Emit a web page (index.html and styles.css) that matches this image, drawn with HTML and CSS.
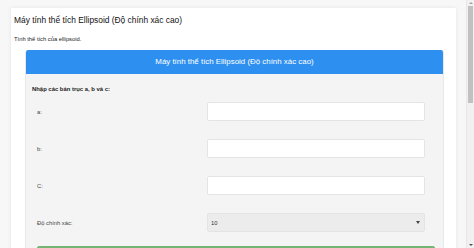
FILE: index.html
```html
<!DOCTYPE html>
<html lang="vi">
<head>
<meta charset="utf-8">
<title>Máy tính thể tích Ellipsoid</title>
<link rel="stylesheet" href="styles.css">
</head>
<body>
<div class="container">
  <h1 class="title">Máy tính thể tích Ellipsoid (Độ chính xác cao)</h1>
  <p class="desc">Tính thể tích của ellipsoid.</p>
  <div class="card">
    <div class="card-header">Máy tính thể tích Ellipsoid (Độ chính xác cao)</div>
    <div class="card-body">
      <div class="section-label">Nhập các bán trục a, b và c:</div>
      <div class="row"><label class="lbl">a:</label><input class="field" type="text"></div>
      <div class="row"><label class="lbl">b:</label><input class="field" type="text"></div>
      <div class="row"><label class="lbl">C:</label><input class="field" type="text"></div>
      <div class="row"><label class="lbl">Độ chính xác:</label>
        <div class="select-wrap">
          <select class="field select"><option>10</option></select>
        </div>
      </div>
      <button class="btn">Tính toán</button>
      <div class="result"></div>
    </div>
  </div>
</div>
<div class="scrollbar" aria-hidden="true">
  <span class="sb-up"></span>
  <span class="sb-thumb"></span>
  <span class="sb-down"></span>
</div>
</body>
</html>
```
FILE: styles.css
```css
body {
  margin: 0;
  background: #f7f7f7;
  font-family: "Liberation Sans", Arial, sans-serif;
  color: #222;
  padding: 8px 18px 300px 11px;
}
.container {
  background: #fff;
  box-shadow: 0 0 4px rgba(0,0,0,0.08);
  padding: 7px 12px 10px 14px;
}
.title {
  font-size: 8.4px;
  font-weight: normal;
  margin: 0 0 0 -11px;
  line-height: 11px;
  color: #111;
}
.desc {
  font-size: 5.8px;
  margin: 10px 0 0 -11px;
  line-height: 7px;
  color: #222;
}
.card {
  margin-top: 7px;
  border-radius: 3px;
  overflow: hidden;
  background: #f4f4f4;
  border: 1px solid #e8e8e8;
  border-top: none;
}
.card-header {
  background: #2d8ff0;
  color: #fff;
  text-align: center;
  font-size: 7.9px;
  height: 24px;
  line-height: 23px;
}
.card-body {
  padding: 11px 8px 0 6px;
}
.section-label {
  font-size: 5.9px;
  font-weight: bold;
  line-height: 8px;
  margin-bottom: 9px;
}
.row {
  display: grid;
  grid-template-columns: 1fr 218px;
  align-items: center;
  padding: 0 10px 0 5px;
  margin-bottom: 18px;
}
.lbl {
  font-size: 5.8px;
  color: #444;
}
.field {
  box-sizing: border-box;
  display: block;
  width: 100%;
  height: 19px;
  border: 1px solid #e4e4e4;
  border-radius: 2px;
  background: #fff;
  margin: 0;
  font-family: "Liberation Sans", Arial, sans-serif;
}
.select-wrap {
  position: relative;
}
.select-wrap::after {
  content: "";
  position: absolute;
  right: 5px;
  top: 8px;
  border-left: 2px solid transparent;
  border-right: 2px solid transparent;
  border-top: 3px solid #444;
}
.select {
  -webkit-appearance: none;
  appearance: none;
  background: #ececec;
  font-size: 5.8px;
  color: #333;
  padding-left: 3px;
}
.btn {
  display: block;
  box-sizing: border-box;
  width: 398px;
  margin: -4px 0 0 5px;
  height: 20px;
  border: 0;
  padding: 0;
  background-color: #74b574;
  color: #fff;
  border-radius: 2px;
  font-size: 6px;
  font-family: "Liberation Sans", Arial, sans-serif;
}
.result {
  height: 40px;
}
.scrollbar {
  position: fixed;
  top: 0;
  right: 0;
  width: 7px;
  height: 100%;
  background: #f1f1f1;
  border-left: 1px solid #e8e8e8;
}
.sb-up, .sb-down {
  position: absolute;
  left: 2px;
  width: 0;
  height: 0;
  border-left: 2px solid transparent;
  border-right: 2px solid transparent;
}
.sb-up {
  top: 2px;
  border-bottom: 2px solid #a3a3a3;
}
.sb-down {
  bottom: 2px;
  border-top: 2px solid #505050;
}
.sb-thumb {
  position: absolute;
  top: 6px;
  left: 1px;
  width: 5px;
  height: 97px;
  background: #c1c1c1;
}
```
